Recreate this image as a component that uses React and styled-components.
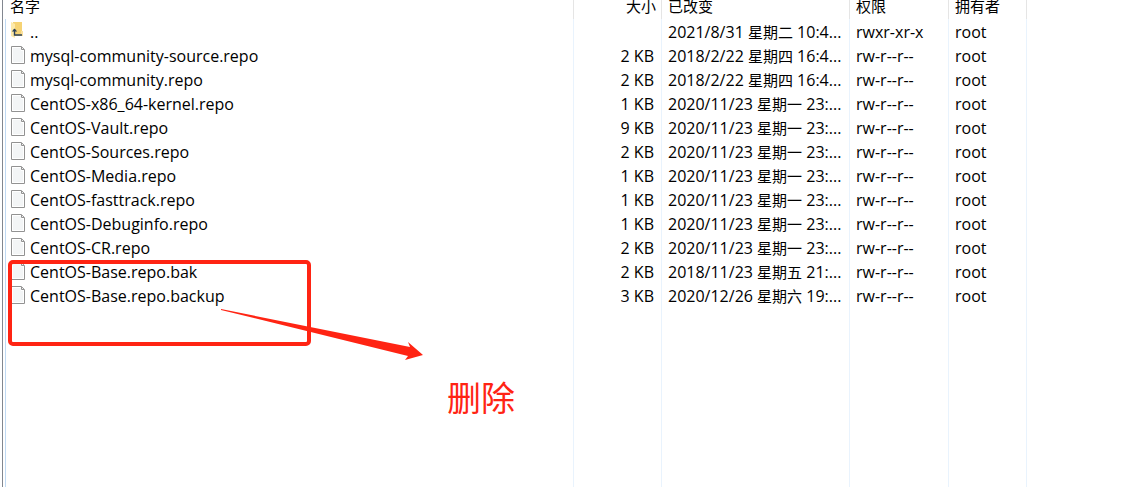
import React from "react";
import styled, { createGlobalStyle } from "styled-components";

const GlobalStyle = createGlobalStyle`
  body {
    margin: 0;
    background-color: #fff;
  }
`;

const Panel = styled.main`
  position: relative;
  box-sizing: border-box;
  display: flex;
  min-height: 100vh;
  margin-left: 2px;
  padding-left: 2px;
  border-left: 1px solid #828790;
  overflow: hidden;
  font-family: "Open Sans", "Noto Sans CJK SC", sans-serif;
  font-size: 16px;
  color: #000;
`;

const FileTable = styled.table`
  flex: 1;
  table-layout: fixed;
  border-collapse: separate;
  border-spacing: 0;
`;

const Col = styled.col`
  width: ${(props) => props.$width || "auto"};
`;

const HeadCell = styled.th`
  box-sizing: border-box;
  height: 19px;
  padding: 0 5px 7px 6px;
  border-right: 1px solid ${(props) => (props.$last ? "transparent" : "#e5e5e5")};
  font-size: 15px;
  font-weight: 400;
  line-height: 12px;
  text-align: ${(props) => props.$align || "left"};
  white-space: nowrap;

  &:first-child {
    padding-left: 5px;
  }
`;

const Cell = styled.td`
  box-sizing: border-box;
  height: 24px;
  padding: 2px 7px 0 6px;
  border-right: 1px solid ${(props) => (props.$last ? "transparent" : "#e9f3fd")};
  line-height: 22px;
  text-align: ${(props) => props.$align || "left"};
  white-space: nowrap;
  overflow: hidden;

  &:first-child {
    padding-left: 4px;
    border-left: 1px solid #c0daf4;
  }
`;

const FillerCell = styled(Cell)`
  height: auto;
`;

const FileName = styled.div`
  display: flex;
  align-items: center;
  gap: 4px;
  height: 22px;
`;

const Weekday = styled.span`
  font-size: 15px;
`;

const Icon = styled.svg`
  flex: none;
  width: 16px;
  height: 22px;
`;

const Frame = styled.div`
  position: absolute;
  top: 260px;
  left: 5px;
  box-sizing: border-box;
  width: 303px;
  height: 86px;
  border: 4px solid #ff2413;
  border-radius: 5px;
`;

const Arrow = styled.svg`
  position: absolute;
  top: 300px;
  left: 217px;
  width: 210px;
  height: 70px;
`;

const Note = styled.div`
  position: absolute;
  top: 377px;
  left: 444px;
  color: #ff2413;
  font-family: "Noto Sans CJK SC", sans-serif;
  font-size: 34px;
  line-height: 40px;
`;

const FileIcon = () => (
  <Icon viewBox="0 0 16 22" aria-hidden="true">
    <path d="M1.5 1.5h10l3 3v14h-13z" fill="#fff" />
    <path d="M3 3h8v3h2v11h-10z" fill="#f3f5f6" />
    <path
      d="M1.5 1.5h10l3 3v14h-13z"
      fill="none"
      stroke="#929292"
      strokeLinejoin="round"
    />
    <path d="M11.5 2v2.5h2.5" fill="#eee" stroke="#929292" />
  </Icon>
);

const ParentIcon = () => (
  <Icon viewBox="0 0 16 22" aria-hidden="true">
    <path d="M3 1h9v14h-9z" fill="#f6d374" />
    <path d="M11 10h2v5h-2z" fill="#f9e0a0" />
    <path d="M1 1l4 2v14l-4-2z" fill="#fde9a9" />
    <path d="M4.5 8v6h7.500" fill="none" stroke="#2d4158" strokeWidth="1.4" />
    <path d="M1.800 10.500l2.700-3 2.700 3z" fill="#2d4158" />
  </Icon>
);

const files = [
  ["..", "", "2021/8/31", "星期二", "10:4...", "rwxr-xr-x"],
  ["mysql-community-source.repo", "2 KB", "2018/2/22", "星期四", "16:4...", "rw-r--r--"],
  ["mysql-community.repo", "2 KB", "2018/2/22", "星期四", "16:4...", "rw-r--r--"],
  ["CentOS-x86_64-kernel.repo", "1 KB", "2020/11/23", "星期一", "23:...", "rw-r--r--"],
  ["CentOS-Vault.repo", "9 KB", "2020/11/23", "星期一", "23:...", "rw-r--r--"],
  ["CentOS-Sources.repo", "2 KB", "2020/11/23", "星期一", "23:...", "rw-r--r--"],
  ["CentOS-Media.repo", "1 KB", "2020/11/23", "星期一", "23:...", "rw-r--r--"],
  ["CentOS-fasttrack.repo", "1 KB", "2020/11/23", "星期一", "23:...", "rw-r--r--"],
  ["CentOS-Debuginfo.repo", "1 KB", "2020/11/23", "星期一", "23:...", "rw-r--r--"],
  ["CentOS-CR.repo", "2 KB", "2020/11/23", "星期一", "23:...", "rw-r--r--"],
  ["CentOS-Base.repo.bak", "2 KB", "2018/11/23", "星期五", "21:...", "rw-r--r--"],
  ["CentOS-Base.repo.backup", "3 KB", "2020/12/26", "星期六", "19:...", "rw-r--r--"],
];

const App = () => {
  return (
    <>
      <GlobalStyle />
      <Panel>
        <FileTable>
          <colgroup>
            <Col $width="569px" />
            <Col $width="88px" />
            <Col $width="188px" />
            <Col $width="99px" />
            <Col $width="78px" />
            <Col />
          </colgroup>
          <thead>
            <tr>
              <HeadCell>名字</HeadCell>
              <HeadCell $align="right">大小</HeadCell>
              <HeadCell>已改变</HeadCell>
              <HeadCell>权限</HeadCell>
              <HeadCell>拥有者</HeadCell>
              <HeadCell as="td" $last />
            </tr>
          </thead>
          <tbody>
            {files.map(([name, size, date, weekday, time, rights]) => (
              <tr key={name}>
                <Cell>
                  <FileName>
                    {name === ".." ? <ParentIcon /> : <FileIcon />}
                    {name}
                  </FileName>
                </Cell>
                <Cell $align="right">{size}</Cell>
                <Cell>
                  {date} <Weekday>{weekday}</Weekday> {time}
                </Cell>
                <Cell>{rights}</Cell>
                <Cell>root</Cell>
                <Cell $last />
              </tr>
            ))}
            <tr>
              <FillerCell />
              <FillerCell />
              <FillerCell />
              <FillerCell />
              <FillerCell />
              <FillerCell $last />
            </tr>
          </tbody>
        </FileTable>
        <Frame />
        <Arrow viewBox="0 0 210 70" aria-hidden="true">
          <path
            d="M1 9L190 47L188 42L203 55L185 60L188 56L1 10Z"
            fill="#ff2413"
          />
        </Arrow>
        <Note>删除</Note>
      </Panel>
    </>
  );
};

export default App;
